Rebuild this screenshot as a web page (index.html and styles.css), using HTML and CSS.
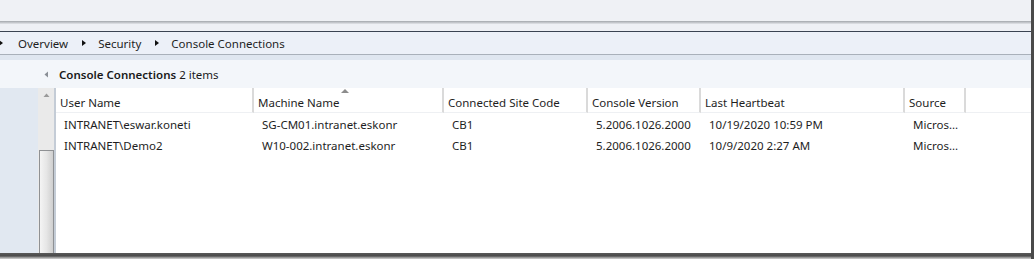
FILE: index.html
```html
<!DOCTYPE html>
<html>
<head>
<meta charset="utf-8">
<link rel="stylesheet" href="styles.css">
</head>
<body>
<div class="window">
  <div class="topbar"></div>
  <div class="topshadow"></div>
  <div class="topgap"></div>
  <div class="crumbs">
    <span class="tri first"></span>
    <span class="crumb">Overview</span>
    <span class="tri"></span>
    <span class="crumb">Security</span>
    <span class="tri"></span>
    <span class="crumb">Console Connections</span>
  </div>
  <div class="band"></div>
  <div class="main">
    <div class="titlerow">
      <div class="collapse"><svg width="5" height="7" viewBox="0 0 5 7"><polygon points="4,0.5 4,6.5 0.5,3.5" fill="#8a8f96"/></svg></div>
      <div class="title"><b>Console Connections</b> 2 items</div>
    </div>
    <div class="body">
      <div class="sidebar"></div>
      <div class="scrollbar">
        <div class="uparrow"><svg width="7" height="5" viewBox="0 0 7 5"><polygon points="0.5,4 6.5,4 3.5,0.5" fill="#9a9a9a"/></svg></div>
        <div class="track"></div>
        <div class="thumb"></div>
      </div>
      <div class="grid">
        <div class="head c1">User Name</div>
        <div class="head c2">Machine Name<span class="sort"></span></div>
        <div class="head">Connected Site Code</div>
        <div class="head">Console Version</div>
        <div class="head">Last Heartbeat</div>
        <div class="head">Source</div>
        <div class="head filler"></div>

        <div class="cell">INTRANET\eswar.koneti</div>
        <div class="cell">SG-CM01.intranet.eskonr</div>
        <div class="cell">CB1</div>
        <div class="cell">5.2006.1026.2000</div>
        <div class="cell">10/19/2020 10:59 PM</div>
        <div class="cell">Micros...</div>
        <div class="cell"></div>

        <div class="cell">INTRANET\Demo2</div>
        <div class="cell">W10-002.intranet.eskonr</div>
        <div class="cell">CB1</div>
        <div class="cell">5.2006.1026.2000</div>
        <div class="cell">10/9/2020 2:27 AM</div>
        <div class="cell">Micros...</div>
        <div class="cell"></div>
      </div>
    </div>
  </div>
  <div class="bottomline"></div>
</div>
</body>
</html>
```
FILE: styles.css
```css
* { box-sizing: border-box; }
html, body {
  margin: 0;
  padding: 0;
  width: 1034px;
  height: 259px;
  overflow: hidden;
  background: #ffffff;
  font-family: "Segoe UI", "Noto Sans", "Open Sans", sans-serif;
  font-size: 11.5px;
  color: #1e1e1e;
}
.window {
  width: 1034px;
  height: 259px;
  display: flex;
  flex-direction: column;
  border-right: 3px solid #4a4a4a;
  box-shadow: inset -4px 0 0 #9a9a9a;
}
.topbar {
  height: 21px;
  background: #eff1f5;
}
.topshadow {
  height: 3px;
  background: linear-gradient(#a2a6ab, #c9ccd1 60%, #e3e5ea);
}
.topgap {
  height: 8px;
  background: #eef0f5;
  border-bottom: 1px solid #3b4352;
}
.crumbs {
  height: 23px;
  background: #ecf0f8;
  border-bottom: 1px solid #a9b0ba;
  display: flex;
  align-items: center;
  white-space: nowrap;
}
.tri {
  width: 0;
  height: 0;
  border-top: 3.5px solid transparent;
  border-bottom: 3.5px solid transparent;
  border-left: 4px solid #111;
  margin-right: 12px;
}
.tri.first { margin-right: 15px; margin-left: -1px; }
.crumb { margin-right: 14px; }
.band {
  height: 5px;
  background: #dfe6f0;
}
.main {
  flex: 1;
  display: flex;
  flex-direction: column;
  background: #f3f6fa;
}
.titlerow {
  height: 28px;
  display: flex;
  align-items: center;
}
.collapse {
  width: 59px;
  display: flex;
  justify-content: flex-end;
  padding-right: 10px;
  padding-top: 1px;
}
.collapse svg { display: block; }
.title { color: #1a1a1a; }
.title b { font-weight: 600; }
.body {
  flex: 1;
  display: flex;
  min-height: 0;
}
.sidebar {
  width: 38px;
  background: #e1e8f1;
}
.scrollbar {
  width: 18px;
  background: #eaeaea;
  border-right: 2px solid #c4ccd6;
  display: flex;
  flex-direction: column;
}
.uparrow {
  height: 16px;
  display: flex;
  justify-content: center;
  padding-top: 5px;
}
.uparrow svg { display: block; }
.track { height: 46px; }
.thumb {
  flex: 1;
  margin-left: 1px;
  border: 1px solid #8f9194;
  border-bottom: none;
  background: linear-gradient(90deg, #f4f4f4, #e6e6e6 50%, #cfcfcf);
}
.grid {
  flex: 1;
  background: #ffffff;
  display: grid;
  grid-template-columns: 198px 190px 144px 113px 204px 61px 1fr;
  grid-template-rows: 25px 21px 21px;
  align-content: start;
}
.head {
  position: relative;
  height: 25px;
  padding-left: 4px;
  padding-top: 7px;
  border-right: 2px solid #dadada;
  border-bottom: 1px solid #eef0f3;
  white-space: nowrap;
}
.head.filler { border-right: none; }
.sort {
  position: absolute;
  left: 87px;
  top: 1px;
  width: 0;
  height: 0;
  border-left: 4px solid transparent;
  border-right: 4px solid transparent;
  border-bottom: 4px solid #8c8c8c;
}
.cell {
  padding-left: 8px;
  padding-top: 4px;
  white-space: nowrap;
}
.bottomline {
  height: 6px;
  background: linear-gradient(#595959, #4a4a4a 50%, #8e8e8e 70%, #d4d4d4);
}
```
